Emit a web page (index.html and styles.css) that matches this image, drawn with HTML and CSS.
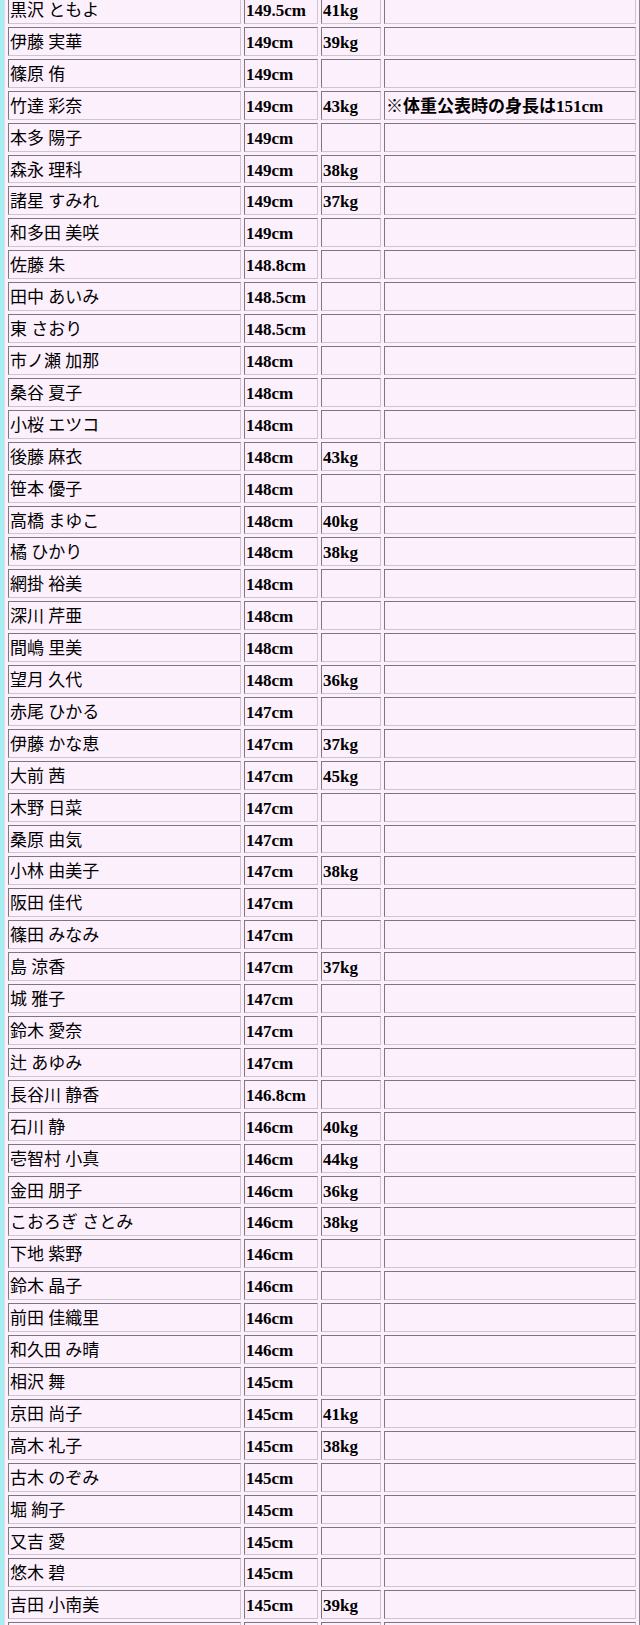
FILE: index.html
```html
<!DOCTYPE html>
<html lang="ja">
<head>
<meta charset="utf-8">
<title>身長一覧</title>
<link rel="stylesheet" href="styles.css">
</head>
<body>
<table class="list">
<colgroup><col class="c-name"><col class="c-h"><col class="c-w"><col class="c-note"></colgroup>
<tbody>
<tr><td class="name">黒沢 ともよ</td><td class="num">149.5cm</td><td class="num">41kg</td><td class="note"></td></tr>
<tr><td class="name">伊藤 実華</td><td class="num">149cm</td><td class="num">39kg</td><td class="note"></td></tr>
<tr><td class="name">篠原 侑</td><td class="num">149cm</td><td class="num"></td><td class="note"></td></tr>
<tr><td class="name">竹達 彩奈</td><td class="num">149cm</td><td class="num">43kg</td><td class="note">※体重公表時の身長は151cm</td></tr>
<tr><td class="name">本多 陽子</td><td class="num">149cm</td><td class="num"></td><td class="note"></td></tr>
<tr><td class="name">森永 理科</td><td class="num">149cm</td><td class="num">38kg</td><td class="note"></td></tr>
<tr><td class="name">諸星 すみれ</td><td class="num">149cm</td><td class="num">37kg</td><td class="note"></td></tr>
<tr><td class="name">和多田 美咲</td><td class="num">149cm</td><td class="num"></td><td class="note"></td></tr>
<tr><td class="name">佐藤 朱</td><td class="num">148.8cm</td><td class="num"></td><td class="note"></td></tr>
<tr><td class="name">田中 あいみ</td><td class="num">148.5cm</td><td class="num"></td><td class="note"></td></tr>
<tr><td class="name">東 さおり</td><td class="num">148.5cm</td><td class="num"></td><td class="note"></td></tr>
<tr><td class="name">市ノ瀬 加那</td><td class="num">148cm</td><td class="num"></td><td class="note"></td></tr>
<tr><td class="name">桑谷 夏子</td><td class="num">148cm</td><td class="num"></td><td class="note"></td></tr>
<tr><td class="name">小桜 エツコ</td><td class="num">148cm</td><td class="num"></td><td class="note"></td></tr>
<tr><td class="name">後藤 麻衣</td><td class="num">148cm</td><td class="num">43kg</td><td class="note"></td></tr>
<tr><td class="name">笹本 優子</td><td class="num">148cm</td><td class="num"></td><td class="note"></td></tr>
<tr><td class="name">高橋 まゆこ</td><td class="num">148cm</td><td class="num">40kg</td><td class="note"></td></tr>
<tr><td class="name">橘 ひかり</td><td class="num">148cm</td><td class="num">38kg</td><td class="note"></td></tr>
<tr><td class="name">網掛 裕美</td><td class="num">148cm</td><td class="num"></td><td class="note"></td></tr>
<tr><td class="name">深川 芹亜</td><td class="num">148cm</td><td class="num"></td><td class="note"></td></tr>
<tr><td class="name">間嶋 里美</td><td class="num">148cm</td><td class="num"></td><td class="note"></td></tr>
<tr><td class="name">望月 久代</td><td class="num">148cm</td><td class="num">36kg</td><td class="note"></td></tr>
<tr><td class="name">赤尾 ひかる</td><td class="num">147cm</td><td class="num"></td><td class="note"></td></tr>
<tr><td class="name">伊藤 かな恵</td><td class="num">147cm</td><td class="num">37kg</td><td class="note"></td></tr>
<tr><td class="name">大前 茜</td><td class="num">147cm</td><td class="num">45kg</td><td class="note"></td></tr>
<tr><td class="name">木野 日菜</td><td class="num">147cm</td><td class="num"></td><td class="note"></td></tr>
<tr><td class="name">桑原 由気</td><td class="num">147cm</td><td class="num"></td><td class="note"></td></tr>
<tr><td class="name">小林 由美子</td><td class="num">147cm</td><td class="num">38kg</td><td class="note"></td></tr>
<tr><td class="name">阪田 佳代</td><td class="num">147cm</td><td class="num"></td><td class="note"></td></tr>
<tr><td class="name">篠田 みなみ</td><td class="num">147cm</td><td class="num"></td><td class="note"></td></tr>
<tr><td class="name">島 涼香</td><td class="num">147cm</td><td class="num">37kg</td><td class="note"></td></tr>
<tr><td class="name">城 雅子</td><td class="num">147cm</td><td class="num"></td><td class="note"></td></tr>
<tr><td class="name">鈴木 愛奈</td><td class="num">147cm</td><td class="num"></td><td class="note"></td></tr>
<tr><td class="name">辻 あゆみ</td><td class="num">147cm</td><td class="num"></td><td class="note"></td></tr>
<tr><td class="name">長谷川 静香</td><td class="num">146.8cm</td><td class="num"></td><td class="note"></td></tr>
<tr><td class="name">石川 静</td><td class="num">146cm</td><td class="num">40kg</td><td class="note"></td></tr>
<tr><td class="name">壱智村 小真</td><td class="num">146cm</td><td class="num">44kg</td><td class="note"></td></tr>
<tr><td class="name">金田 朋子</td><td class="num">146cm</td><td class="num">36kg</td><td class="note"></td></tr>
<tr><td class="name">こおろぎ さとみ</td><td class="num">146cm</td><td class="num">38kg</td><td class="note"></td></tr>
<tr><td class="name">下地 紫野</td><td class="num">146cm</td><td class="num"></td><td class="note"></td></tr>
<tr><td class="name">鈴木 晶子</td><td class="num">146cm</td><td class="num"></td><td class="note"></td></tr>
<tr><td class="name">前田 佳織里</td><td class="num">146cm</td><td class="num"></td><td class="note"></td></tr>
<tr><td class="name">和久田 み晴</td><td class="num">146cm</td><td class="num"></td><td class="note"></td></tr>
<tr><td class="name">相沢 舞</td><td class="num">145cm</td><td class="num"></td><td class="note"></td></tr>
<tr><td class="name">京田 尚子</td><td class="num">145cm</td><td class="num">41kg</td><td class="note"></td></tr>
<tr><td class="name">高木 礼子</td><td class="num">145cm</td><td class="num">38kg</td><td class="note"></td></tr>
<tr><td class="name">古木 のぞみ</td><td class="num">145cm</td><td class="num"></td><td class="note"></td></tr>
<tr><td class="name">堀 絢子</td><td class="num">145cm</td><td class="num"></td><td class="note"></td></tr>
<tr><td class="name">又吉 愛</td><td class="num">145cm</td><td class="num"></td><td class="note"></td></tr>
<tr><td class="name">悠木 碧</td><td class="num">145cm</td><td class="num"></td><td class="note"></td></tr>
<tr><td class="name">吉田 小南美</td><td class="num">145cm</td><td class="num">39kg</td><td class="note"></td></tr>
<tr><td class="name"></td><td class="num"></td><td class="num"></td><td class="note"></td></tr>
</tbody>
</table>
</body>
</html>
```
FILE: styles.css
```css
html, body {
  margin: 0;
  padding: 0;
}
body {
  background: #a6eef2;
  overflow: hidden;
}
.list {
  margin: -9px 0 0 4px;
  width: 636px;
  table-layout: fixed;
  border-collapse: separate;
  border-spacing: 3px;
  background: #fdf0fd;
  border: 1px solid;
  border-color: #e6dce6 #8a848c #8a848c #e6dce6;
  font-family: "Liberation Serif", "Noto Sans CJK JP", serif;
  font-size: 17px;
  color: #000;
}
.c-name { width: 233px; }
.c-h { width: 74px; }
.c-w { width: 60px; }
.c-note { width: 252px; }
.list tr {
  height: 28.9px;
}
.list td {
  box-sizing: border-box;
  height: 28.9px;
  padding: 3px 1px 0 1px;
  line-height: 23.9px;
  vertical-align: top;
  white-space: nowrap;
  overflow: hidden;
  border: 1px solid;
  border-color: #7c7680 #cdc6ce #cdc6ce #7c7680;
}
.name {
  font-weight: normal;
  padding-left: 2px;
}
.num, .note {
  font-weight: bold;
}
```
